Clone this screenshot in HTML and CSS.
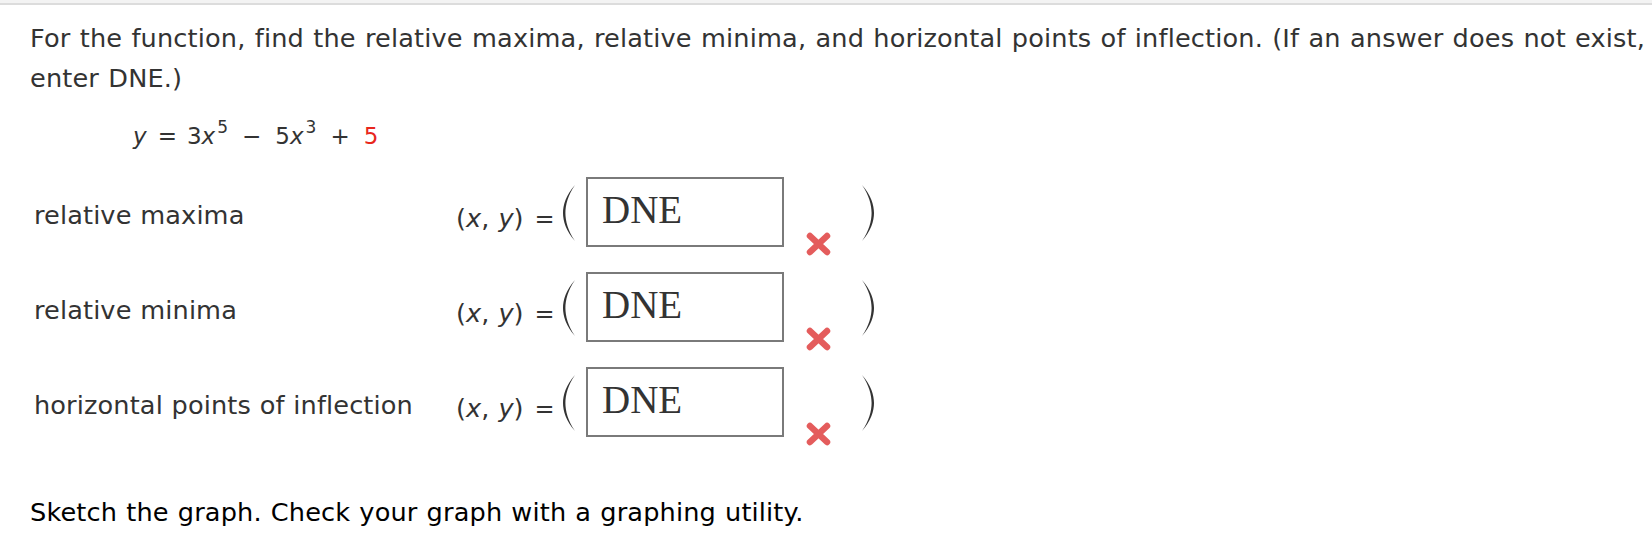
FILE: index.html
```html
<!DOCTYPE html>
<html>
<head>
<meta charset="utf-8">
<link rel="stylesheet" href="styles.css">
</head>
<body>
<div class="topbar"></div>
<div class="content">
  <p class="prompt">For the function, find the relative maxima, relative minima, and horizontal points of inflection. (If an answer does not exist, enter DNE.)</p>
  <div class="equation">
    <span class="mi">y</span><span class="mo eq">=</span><span class="mn">3</span><span class="mi">x</span><sup class="sup">5</sup><span class="mo">−</span><span class="mn">5</span><span class="mi">x</span><sup class="sup">3</sup><span class="mo">+</span><span class="mn red">5</span>
  </div>
  <div class="rows">
    <div class="row">
      <span class="label">relative maxima</span>
      <span class="coord">(<i>x</i>, <i>y</i>)<span class="equals">=</span></span>
      <svg class="paren" viewBox="0 0 14 56" width="14" height="56"><path d="M13 0 C4 10 1 20 1 28 C1 36 4 46 13 56 C6 46 3.4 36 3.4 28 C3.4 20 6 10 13 0 Z"/></svg>
      <div class="box">DNE</div>
      <svg class="cross" viewBox="0 0 27 26" width="27" height="26"><path d="M5 5 L22 21 M22 5 L5 21"/></svg>
      <svg class="paren" viewBox="0 0 14 56" width="14" height="56"><path d="M1 0 C10 10 13 20 13 28 C13 36 10 46 1 56 C8 46 10.6 36 10.6 28 C10.6 20 8 10 1 0 Z"/></svg>
    </div>
    <div class="row">
      <span class="label">relative minima</span>
      <span class="coord">(<i>x</i>, <i>y</i>)<span class="equals">=</span></span>
      <svg class="paren" viewBox="0 0 14 56" width="14" height="56"><path d="M13 0 C4 10 1 20 1 28 C1 36 4 46 13 56 C6 46 3.4 36 3.4 28 C3.4 20 6 10 13 0 Z"/></svg>
      <div class="box">DNE</div>
      <svg class="cross" viewBox="0 0 27 26" width="27" height="26"><path d="M5 5 L22 21 M22 5 L5 21"/></svg>
      <svg class="paren" viewBox="0 0 14 56" width="14" height="56"><path d="M1 0 C10 10 13 20 13 28 C13 36 10 46 1 56 C8 46 10.6 36 10.6 28 C10.6 20 8 10 1 0 Z"/></svg>
    </div>
    <div class="row">
      <span class="label">horizontal points of inflection</span>
      <span class="coord">(<i>x</i>, <i>y</i>)<span class="equals">=</span></span>
      <svg class="paren" viewBox="0 0 14 56" width="14" height="56"><path d="M13 0 C4 10 1 20 1 28 C1 36 4 46 13 56 C6 46 3.4 36 3.4 28 C3.4 20 6 10 13 0 Z"/></svg>
      <div class="box">DNE</div>
      <svg class="cross" viewBox="0 0 27 26" width="27" height="26"><path d="M5 5 L22 21 M22 5 L5 21"/></svg>
      <svg class="paren" viewBox="0 0 14 56" width="14" height="56"><path d="M1 0 C10 10 13 20 13 28 C13 36 10 46 1 56 C8 46 10.6 36 10.6 28 C10.6 20 8 10 1 0 Z"/></svg>
    </div>
  </div>
  <p class="sketch">Sketch the graph. Check your graph with a graphing utility.</p>
</div>
</body>
</html>
```

FILE: styles.css
```css
html, body {
  margin: 0;
  padding: 0;
  background: #fff;
}
body {
  font-family: "DejaVu Sans", Verdana, sans-serif;
  color: #333;
  overflow: hidden;
}
.topbar {
  height: 3px;
  background: #f3f3f3;
  border-bottom: 2px solid #dcdcdc;
}
.content {
  padding: 13px 0 0 30px;
}
.prompt {
  margin: 0 -20px 0 0;
  font-size: 25.6px;
  line-height: 40px;
  letter-spacing: 0.15px;
  word-spacing: 1px;
}
.equation {
  margin: 23px 0 0 103px;
  font-size: 23px;
  line-height: 30px;
  display: flex;
  align-items: baseline;
}
.mi {
  font-style: italic;
}
.mo {
  margin: 0 14px;
}
.mo.eq {
  margin: 0 10px 0 11px;
}
.sup {
  font-size: 17px;
  line-height: 1;
  position: relative;
  top: -11px;
  vertical-align: baseline;
  margin-left: 2px;
}
.red {
  color: #e8261c;
}
.rows {
  margin-top: 26px;
  padding-left: 4px;
  display: flex;
  flex-direction: column;
  gap: 25px;
}
.row {
  display: flex;
  align-items: flex-start;
  height: 70px;
}
.label {
  flex: 0 0 422px;
  font-size: 25.6px;
  line-height: 40px;
  letter-spacing: 0.12px;
  word-spacing: 0.5px;
  margin-top: 18px;
}
.coord {
  font-size: 25.6px;
  line-height: 30px;
  margin-top: 26px;
  width: 96px;
  white-space: nowrap;
  word-spacing: 1px;
}
.equals {
  margin-left: 11px;
  font-size: 24px;
}
.paren {
  fill: #333;
  margin-top: 8px;
  flex: 0 0 auto;
}
.coord + .paren {
  margin-left: 10px;
}
.box {
  box-sizing: border-box;
  width: 198px;
  height: 70px;
  margin-left: 10px;
  border: 2px solid #7a7a7a;
  padding: 9px 0 0 14px;
  font-family: "Liberation Serif", "Times New Roman", serif;
  font-size: 39px;
  line-height: 44px;
  color: #333;
}
.cross {
  margin: 54px 0 0 21px;
  stroke: #e45c5c;
  stroke-width: 6.5;
  stroke-linecap: round;
  fill: none;
  flex: 0 0 auto;
}
.cross + .paren {
  margin-left: 29px;
}
.sketch {
  margin: 55px 0 0 0;
  font-size: 25.6px;
  line-height: 40px;
  letter-spacing: 0.15px;
  word-spacing: 0.8px;
  color: #000;
}
```
